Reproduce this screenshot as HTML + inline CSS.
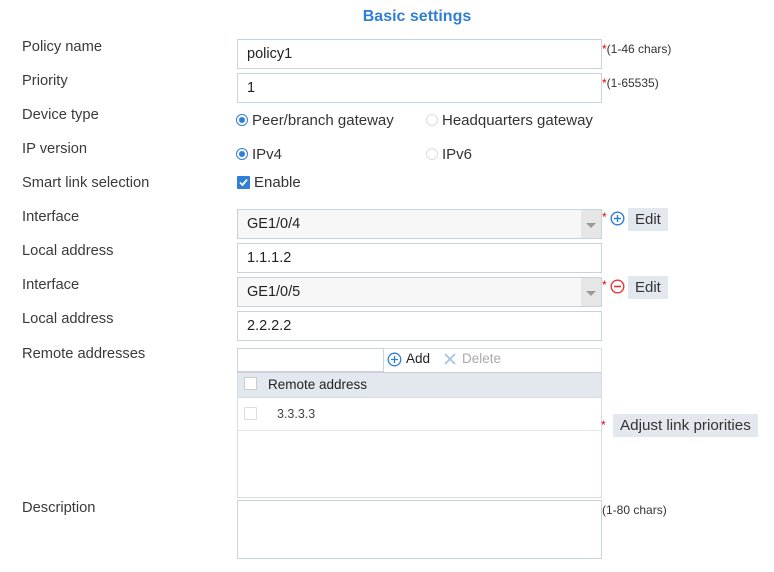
<!DOCTYPE html>
<html><head><meta charset="utf-8"><style>
*{box-sizing:border-box;margin:0;padding:0}
body{width:774px;height:572px;background:#fff;font-family:"Liberation Sans","Noto Sans CJK SC",sans-serif;font-size:15px;color:#333;position:relative;overflow:hidden}
.a{position:absolute;white-space:nowrap}
.lbl{left:22px;color:#3a3a3a;font-size:14.7px}
.inp{position:absolute;left:237px;width:365px;height:30px;border:1px solid #c9d3e0;background:#fff;padding-left:9px;line-height:28px;color:#222;font-size:14.5px}
.sel{background:#f7f7f7}
.sel .arr{position:absolute;right:0;top:0;width:20px;height:28px;background:#e6e6e6}
.sel .arr:after{content:"";position:absolute;left:5px;top:13px;border:5px solid transparent;border-top:5px solid #999;border-bottom:0}
.star{color:#e00;font-size:12px}
.hint{font-size:12px;color:#333}
.btn{position:absolute;background:#e3e8ef;color:#333;height:23px;line-height:23px;padding:0 7px;font-size:15px}
.radio{display:inline-block;width:12px;height:12px;border-radius:50%;border:1px solid #ddd;vertical-align:-1px;margin-right:4px;position:relative}
.radio.on{border-color:#2f7fd5}
.radio.on:after{content:"";position:absolute;left:2px;top:2px;width:6px;height:6px;border-radius:50%;background:#2f7fd5}
.cb{position:absolute;width:13px;height:13px;border:1px solid #ccc;background:#fff}
</style></head><body>
<div class="a" style="left:0;width:834px;text-align:center;top:8px;font-size:16px;font-weight:bold;color:#2f7fd5">Basic settings</div>

<div class="a lbl" style="top:39px">Policy name</div>
<div class="a lbl" style="top:73px">Priority</div>
<div class="a lbl" style="top:107px">Device type</div>
<div class="a lbl" style="top:141px">IP version</div>
<div class="a lbl" style="top:175px">Smart link selection</div>
<div class="a lbl" style="top:209px">Interface</div>
<div class="a lbl" style="top:243px">Local address</div>
<div class="a lbl" style="top:277px">Interface</div>
<div class="a lbl" style="top:311px">Local address</div>
<div class="a lbl" style="top:346px">Remote addresses</div>
<div class="a lbl" style="top:500px">Description</div>

<div class="inp" style="top:39px">policy1</div>
<div class="a" style="left:602px;top:40px"><span class="star">*</span><span class="hint">(1-46 chars)</span></div>
<div class="inp" style="top:73px">1</div>
<div class="a" style="left:602px;top:74px"><span class="star">*</span><span class="hint">(1-65535)</span></div>

<div class="a" style="left:236px;top:112px"><span class="radio on"></span>Peer/branch gateway</div>
<div class="a" style="left:426px;top:112px"><span class="radio"></span>Headquarters gateway</div>
<div class="a" style="left:236px;top:146px"><span class="radio on"></span>IPv4</div>
<div class="a" style="left:426px;top:146px"><span class="radio"></span>IPv6</div>
<div class="a" style="left:237px;top:176px;width:13px;height:13px;background:#2f7fd5;border-radius:1px"><svg width="13" height="13"><path d="M3 6.5L5.5 9L10 3.5" stroke="#fff" stroke-width="1.8" fill="none"/></svg></div>
<div class="a" style="left:254px;top:174px">Enable</div>

<div class="inp sel" style="top:209px">GE1/0/4<div class="arr"></div></div>
<div class="a star" style="left:602px;top:210px">*</div>
<svg class="a" style="left:610px;top:211px" width="15" height="15"><circle cx="7.5" cy="7.5" r="6.3" stroke="#2f7fd5" stroke-width="1.4" fill="none"/><path d="M7.5 4v7M4 7.5h7" stroke="#2f7fd5" stroke-width="1.4"/></svg>
<div class="btn" style="left:628px;top:208px">Edit</div>
<div class="inp" style="top:243px">1.1.1.2</div>
<div class="inp sel" style="top:277px">GE1/0/5<div class="arr"></div></div>
<div class="a star" style="left:602px;top:278px">*</div>
<svg class="a" style="left:610px;top:279px" width="15" height="15"><circle cx="7.5" cy="7.5" r="6.3" stroke="#e33" stroke-width="1.4" fill="none"/><path d="M4 7.5h7" stroke="#e33" stroke-width="1.6"/></svg>
<div class="btn" style="left:628px;top:276px">Edit</div>
<div class="inp" style="top:311px">2.2.2.2</div>

<div class="a" style="left:237px;top:348px;width:365px;height:150px;border:1px solid #d5dce6"></div>
<div class="a" style="left:237px;top:348px;width:147px;height:24px;border:1px solid #c9d3e0"></div>
<svg class="a" style="left:387px;top:352px" width="15" height="15"><circle cx="7.5" cy="7.5" r="6.3" stroke="#2f7fd5" stroke-width="1.3" fill="none"/><path d="M7.5 4v7M4 7.5h7" stroke="#2f7fd5" stroke-width="1.3"/></svg>
<div class="a" style="left:406px;top:351px;font-size:13.5px;color:#222">Add</div>
<svg class="a" style="left:444px;top:353px" width="12" height="12"><path d="M1 1L11 11M11 1L1 11" stroke="#a9c3e3" stroke-width="1.8"/></svg>
<div class="a" style="left:462px;top:351px;font-size:13.5px;color:#aaa">Delete</div>
<div class="a" style="left:238px;top:372px;width:363px;height:26px;background:#e3e8ef;border-top:1px solid #ccd;border-bottom:1px solid #d5dce6"></div>
<div class="cb" style="left:244px;top:377px"></div>
<div class="a" style="left:268px;top:377px;font-size:13.5px;color:#222">Remote address</div>
<div class="cb" style="left:244px;top:407px;border-color:#ddd"></div>
<div class="a" style="left:277px;top:407px;font-size:12.5px;color:#444">3.3.3.3</div>
<div class="a" style="left:238px;top:430px;width:363px;height:1px;background:#e6e6e6"></div>
<div class="a star" style="left:601px;top:418px">*</div>
<div class="btn" style="left:613px;top:414px;padding:0 7px;font-size:15.2px">Adjust link priorities</div>

<div class="a" style="left:237px;top:500px;width:365px;height:59px;border:1px solid #c9d3e0"></div>
<div class="a hint" style="left:602px;top:503px">(1-80 chars)</div>
</body></html>
